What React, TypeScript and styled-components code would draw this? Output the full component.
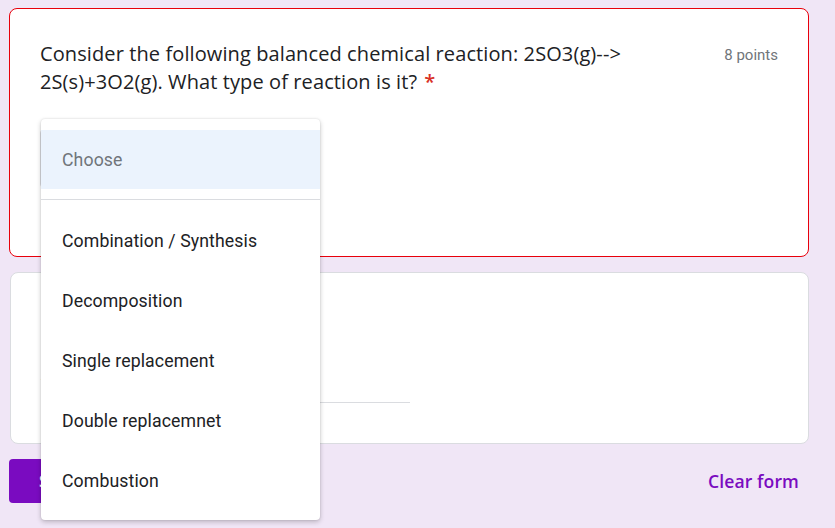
import React from "react";
import styled, { createGlobalStyle } from "styled-components";

const GlobalStyle = createGlobalStyle`
  html, body {
    margin: 0;
    padding: 0;
    background: #f0e6f6;
  }
  * { box-sizing: border-box; }
`;

const Page = styled.main`
  padding: 8px 0 0 9px;
  width: 809px;
  min-height: 540px;
  display: flex;
  flex-direction: column;
  gap: 15px;
`;

const Card = styled.section<{ $error?: boolean }>`
  position: relative;
  background: #fff;
  border: 1px solid ${({ $error }) => ($error ? "#e8000b" : "#dadce0")};
  border-radius: 8px;
  padding: 31px 30px 0 30px;
`;

const QuestionCard = styled(Card)`
  height: 249px;
  z-index: 2;
`;

const PlainCard = styled(Card)`
  margin-left: 1px;
  height: 172px;
  padding-top: 28px;
`;

const TitleRow = styled.div`
  display: flex;
  align-items: flex-start;
  justify-content: space-between;
  gap: 24px;
`;

const Title = styled.div`
  font-family: "Open Sans", sans-serif;
  font-size: 20px;
  letter-spacing: 0.1px;
  line-height: 28px;
  color: #202124;
  max-width: 640px;
`;

const Required = styled.span`
  color: #d93025;
  margin-left: 7px;
  font-weight: 600;
`;

const Points = styled.div`
  font-family: Roboto, sans-serif;
  font-size: 15px;
  color: #70757a;
  line-height: 28px;
  white-space: nowrap;
  padding-top: 1px;
`;

const SelectWrap = styled.div`
  position: relative;
  margin-top: 33px;
  width: 280px;
  height: 59px;
  border: 1px solid #dadce0;
  border-radius: 4px;
  display: flex;
  align-items: center;
  padding-left: 20px;
  font-family: Roboto, sans-serif;
  font-size: 17.7px;
  color: #5f6368;
`;

const Menu = styled.ul`
  position: absolute;
  z-index: 10;
  top: -11px;
  left: 0;
  width: 279px;
  margin: 0;
  padding: 11px 0 9px;
  list-style: none;
  background: #fff;
  border-radius: 4px;
  box-shadow: 0 2px 5px rgba(0, 0, 0, 0.22), 0 0 2px rgba(0, 0, 0, 0.12);
`;

const Option = styled.li<{ $placeholder?: boolean }>`
  display: flex;
  align-items: center;
  height: ${({ $placeholder }) => ($placeholder ? "59px" : "60px")};
  padding-left: 21px;
  font-family: Roboto, sans-serif;
  font-size: 17.7px;
  letter-spacing: 0.1px;
  color: ${({ $placeholder }) => ($placeholder ? "#70757a" : "#202124")};
  background: ${({ $placeholder }) => ($placeholder ? "#ebf3fd" : "transparent")};
`;

const Divider = styled.li`
  height: 1px;
  margin: 10px 0 11px;
  background: #dadce0;
`;

const FieldLabel = styled.div`
  font-family: "Open Sans", sans-serif;
  font-size: 20px;
  line-height: 28px;
  color: #202124;
`;

const AnswerInput = styled.div`
  margin-top: 47px;
  width: 369px;
  padding-bottom: 8px;
  border-bottom: 1px solid #dadce0;
  font-family: Roboto, sans-serif;
  font-size: 15px;
  color: #70757a;
`;

const Footer = styled.div`
  display: flex;
  align-items: center;
  justify-content: space-between;
  padding-right: 10px;
`;

const SubmitButton = styled.button`
  height: 44px;
  width: 100px;
  border: none;
  border-radius: 4px;
  background: #7a0bc0;
  color: #fff;
  font-family: "Open Sans", sans-serif;
  font-weight: 600;
  font-size: 16px;
  text-align: left;
  padding-left: 30px;
`;

const ClearLink = styled.button`
  border: none;
  background: none;
  padding: 0;
  line-height: 44px;
  color: #7a0bc0;
  font-family: "Open Sans", sans-serif;
  font-weight: 600;
  font-size: 17.6px;
  letter-spacing: 0.1px;
`;

const options = [
  "Combination / Synthesis",
  "Decomposition",
  "Single replacement",
  "Double replacemnet",
  "Combustion",
];

const question =
  "Consider the following balanced chemical reaction: 2SO3(g)--> 2S(s)+3O2(g). What type of reaction is it?";

export default function App() {
  return (
    <>
      <GlobalStyle />
      <Page>
        <QuestionCard $error>
          <TitleRow>
            <Title>
              {question}
              <Required>*</Required>
            </Title>
            <Points>8 points</Points>
          </TitleRow>
          <SelectWrap>
            Choose
            <Menu>
              <Option $placeholder>Choose</Option>
              <Divider />
              {options.map((o) => (
                <Option key={o}>{o}</Option>
              ))}
            </Menu>
          </SelectWrap>
        </QuestionCard>
        <PlainCard>
          <FieldLabel>Name</FieldLabel>
          <AnswerInput>Your answer</AnswerInput>
        </PlainCard>
        <Footer>
          <SubmitButton>Submit</SubmitButton>
          <ClearLink>Clear form</ClearLink>
        </Footer>
      </Page>
    </>
  );
}
